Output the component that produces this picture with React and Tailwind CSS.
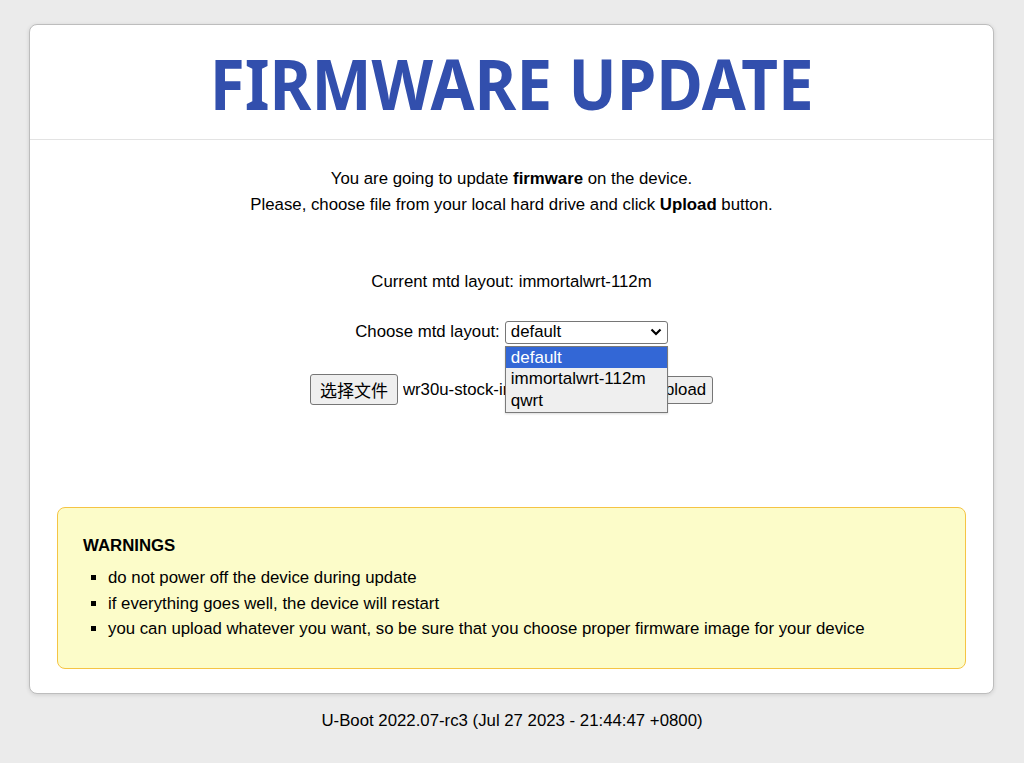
import React from "react";

const Chevron = () => (
  <svg width="12" height="8" viewBox="0 0 12 8" className="block">
    <path d="M1.5 1.5 L6 6 L10.5 1.5" fill="none" stroke="#000" strokeWidth="2.2" />
  </svg>
);

const MtdSelect = ({ options, value }) => {
  return (
    <div className="relative inline-block align-middle">
      <div className="flex h-[23px] w-[163px] items-center justify-between rounded-[3px] border border-[#767676] bg-white pl-[5px] pr-[5px]">
        <span className="leading-none">{value}</span>
        <Chevron />
      </div>
      <ul className="absolute left-0 top-[25px] z-10 w-[163px] border border-[#7a7a7a] bg-[#efefef] text-left text-[17px] shadow-[0_1px_2px_rgba(0,0,0,0.15)]">
        {options.map((opt) => (
          <li
            key={opt}
            className={
              opt === value
                ? "h-[21px] bg-[#3367d6] pl-[5px] leading-[21px] text-white"
                : "h-[22px] pl-[5px] leading-[22px] text-black"
            }
          >
            {opt}
          </li>
        ))}
      </ul>
    </div>
  );
};

const warnings = [
  "do not power off the device during update",
  "if everything goes well, the device will restart",
  "you can upload whatever you want, so be sure that you choose proper firmware image for your device",
];

export default function App() {
  return (
    <div className="min-h-screen bg-[#ebebeb] pt-[24px] font-['Liberation_Sans',Arial,sans-serif] text-[16.8px] text-black">
      <div className="ml-[29px] mr-[30px] h-[670px] rounded-[8px] border border-[#bdbdbd] bg-white shadow-[0_1px_4px_rgba(0,0,0,0.12)]">
        <div className="flex h-[115px] items-center justify-center border-b border-[#e3e3e3]">
          <h1 className="mt-[1px] origin-center scale-x-[0.91] font-['Noto_Sans',sans-serif] text-[70px] font-bold leading-none text-[#324fad]">
            FIRMWARE UPDATE
          </h1>
        </div>

        <div className="px-[27px] text-center">
          <p className="mt-[26px] leading-[26px]">
            You are going to update <b>firmware</b> on the device.
            <br />
            Please, choose file from your local hard drive and click <b>Upload</b> button.
          </p>

          <p className="mt-[51px] leading-[26px]">Current mtd layout: immortalwrt-112m</p>

          <div className="mt-[24px] flex h-[26px] items-center justify-center gap-[5px]">
            <span>Choose mtd layout:</span>
            <MtdSelect options={["default", "immortalwrt-112m", "qwrt"]} value="default" />
          </div>

          <div className="mt-[29px] flex items-center justify-center gap-[5px]">
            <div className="flex h-[31px] items-center rounded-[3px] border border-[#767676] bg-[#efefef] px-[9px] font-['Noto_Sans_CJK_SC',sans-serif] text-[17px]">
              选择文件
            </div>
            <span className="w-[238px] overflow-hidden text-ellipsis whitespace-nowrap text-left">
              wr30u-stock-immortalwrt-112m.bin
            </span>
            <div className="flex h-[28px] items-center rounded-[3px] border border-[#767676] bg-[#efefef] px-[6px]">
              Upload
            </div>
          </div>

          <div className="mt-[102px] h-[162px] rounded-[8px] border border-[#f5c444] bg-[#fcfcc9] px-[25px] pt-[25px] text-left">
            <h3 className="font-bold leading-[26px]">WARNINGS</h3>
            <ul className="mt-[6px] pl-[25px]">
              {warnings.map((w) => (
                <li key={w} className="list-[square] leading-[25.5px]">
                  {w}
                </li>
              ))}
            </ul>
          </div>
        </div>
      </div>

      <p className="mt-[16px] text-center leading-[22px]">
        U-Boot 2022.07-rc3 (Jul 27 2023 - 21:44:47 +0800)
      </p>
    </div>
  );
}
